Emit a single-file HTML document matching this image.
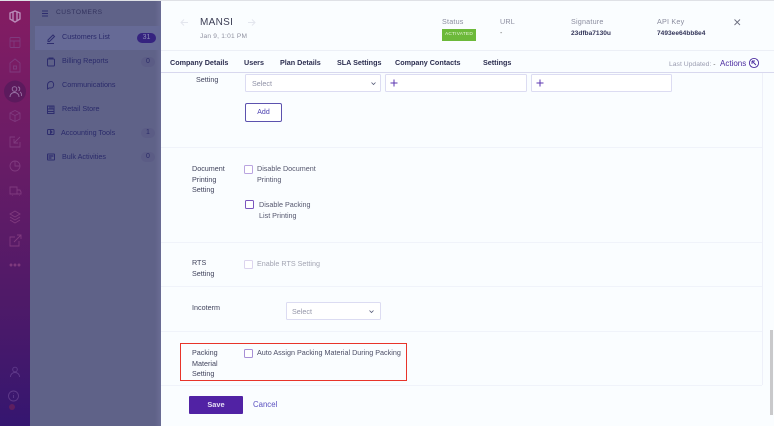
<!DOCTYPE html>
<html><head><meta charset="utf-8">
<style>
html,body{margin:0;padding:0;width:774px;height:426px;overflow:hidden;background:#fafdff;font-family:"Liberation Sans",sans-serif;}
.a{position:absolute;white-space:nowrap;}
.line{position:absolute;height:1px;background:#f0f3fa;}
.lb{font-size:7.2px;color:#40435c;line-height:10.5px;}
.nav{position:absolute;left:62px;font-size:7.2px;color:#2a2a6a;white-space:nowrap;line-height:10px;}
.bdg{position:absolute;width:14px;height:10px;border-radius:5px;background:#5b5c85;color:#2a2a68;font-size:7px;text-align:center;line-height:10px;}
.tab{position:absolute;top:58px;font-size:7.2px;color:#2c2e50;white-space:nowrap;line-height:10px;font-weight:bold;}
.cb{position:absolute;width:7px;height:7px;border:1.2px solid #b9a4e0;border-radius:1.5px;background:#fff;}
.box{position:absolute;background:#fff;border:1px solid #dcdcf2;border-radius:1.5px;box-sizing:border-box;}
svg{position:absolute;overflow:visible;fill:none;}
</style></head><body>
<div class="a" style="left:0;top:0;width:774px;height:1px;background:#dfe1e6;z-index:5"></div>
<div class="a" style="left:0;top:0;width:30px;height:426px;background:linear-gradient(180deg,#851c62 0%,#6a1c66 35%,#4f1a68 70%,#351670 100%)"></div>
<div class="a" style="left:30px;top:0;width:131px;height:426px;background:#5f6288"></div>
<div class="a" style="left:155px;top:0;width:6px;height:426px;background:linear-gradient(90deg,#5f6288,#6a6c94)"></div>
<div class="a" style="left:35px;top:26px;width:126px;height:24px;background:#666a96"></div>

<!-- rail icons -->
<svg style="left:0;top:0" width="30" height="426" stroke="#7f3a7e" stroke-width=".9">
<path d="M10 13l5-2 5 2v6l-5 3-5-3zM13 12v9M17 11.500v9" stroke="#b98ab8" stroke-width="1.400"/>
<rect x="10" y="37.500" width="10" height="10" rx="1"/><path d="M10 41h10M14 41v6.500"/>
<path d="M10 63l5-4 5 4v9h-10zM13.500 66h3v3h-3z"/>
<circle cx="15" cy="91.500" r="11" fill="#5c1a5d" stroke="none"/>
<circle cx="14.500" cy="89" r="2.300" stroke="#9a74a6"/><path d="M10 97c0-6 9-6 9 0M18 87c2 0 2.500 3 .5 4M20 92c1.500 1 1.500 2 1.500 4" stroke="#9a74a6"/>
<path d="M10 113l5-2.500 5 2.500v6l-5 2.500-5-2.500zM10 113l5 2.500 5-2.500M15 115.500v6"/>
<path d="M15 137h-5v10h10v-5M20 137l-6 6M14 139v4h4"/>
<circle cx="15" cy="166" r="5"/><path d="M15 161v5h5"/>
<path d="M10 187h7v7h-7zM17 190h3l1 2v2h-4zM12 195.500h.5M19 195.500h.5"/>
<path d="M15 211l5 3-5 3-5-3zM10 217l5 3 5-3M10 220l5 3 5-3"/>
<path d="M15 237h-5v9h9v-5M14 242l7-7M17 235h4v4"/>
<circle cx="11" cy="265" r="1" fill="#7f3a7e"/><circle cx="15" cy="265" r="1" fill="#7f3a7e"/><circle cx="19" cy="265" r="1" fill="#7f3a7e"/>
<circle cx="15" cy="369.500" r="2.300" stroke="#5f3a8a"/><path d="M10.500 377c0-6 9-6 9 0" stroke="#5f3a8a"/>
<circle cx="13.500" cy="396" r="5" stroke="#5f3a8a"/><path d="M13.500 395v3M13.500 393.500v.5" stroke="#5f3a8a"/>
<circle cx="12" cy="407" r="3" fill="#5e1f60" stroke="none"/>
</svg>

<!-- panel -->
<svg style="left:0;top:0" width="161" height="426" stroke="#2e2d6e" stroke-width="1">
<path d="M42 11h6M42 13.500h6M42 16h6"/>
<path d="M48 40l5-5 1.500 1.500-5 5h-1.500zM47 43.500h7" />
<path d="M47.500 59h6a1 1 0 0 1 1 1v5a1 1 0 0 1-1 1h-5a1 1 0 0 1-1-1zM49 59v-1h4v1"/>
<path d="M51 81.500c3.500 0 3.500 6.500 0 6.500h-2l-1.500 1v-4c0-2 1.500-3.500 3.500-3.500z"/>
<path d="M47.500 106h6.500v7.500h-6.500zM47.500 109h6.500M47.500 111.500h6.500M50 106v3M52 106v3"/>
<rect x="47.500" y="129.500" width="6.500" height="5" rx="1"/><path d="M50.500 130.500v3l1.500-1.500z"/>
<rect x="47.500" y="154" width="7" height="6" rx=".5"/><path d="M48.500 156h5M48.500 158h3" stroke-width="1.200"/>
</svg>
<div class="a" style="left:56px;top:8px;font-size:6.600px;color:#33335e;letter-spacing:.5px;line-height:10px">CUSTOMERS</div>
<div class="nav" style="top:32px">Customers List</div>
<div class="nav" style="top:56px">Billing Reports</div>
<div class="nav" style="top:80px">Communications</div>
<div class="nav" style="top:104px">Retail Store</div>
<div class="nav" style="top:128px;left:61px">Accounting Tools</div>
<div class="nav" style="top:152px">Bulk Activities</div>
<div class="bdg" style="left:137px;top:33px;width:19px;background:#35237f;color:#8d8cb8">31</div>
<div class="bdg" style="left:141px;top:57px">0</div>
<div class="bdg" style="left:141px;top:128px">1</div>
<div class="bdg" style="left:141px;top:152px">0</div>

<!-- header -->
<div class="line" style="left:161px;top:50px;width:613px;background:#eceff6"></div>
<div class="line" style="left:161px;top:72px;width:613px;background:#d8d8ee"></div>
<svg style="left:180px;top:18px" width="90" height="10" stroke="#e3e6ee" stroke-width="1"><path d="M8 4.500h-7M4 1.500l-3 3 3 3M68 4.500h7M72 1.500l3 3-3 3"/></svg>
<div class="a" style="left:200px;top:16px;font-size:10px;color:#3b3d54;letter-spacing:.3px;line-height:13px">MANSI</div>
<div class="a" style="left:200px;top:32px;font-size:6.600px;color:#8f91a0;letter-spacing:.2px;line-height:9px">Jan 9, 1:01 PM</div>
<div class="a" style="left:442px;top:17px;font-size:7.200px;color:#8b8d9f;line-height:9px;letter-spacing:.2px">Status</div>
<div class="a" style="left:442px;top:29px;width:34px;height:12px;background:#6cb93a;color:#eaf6dd;font-size:4.800px;line-height:12px;text-align:center;letter-spacing:.2px">ACTIVATED</div>
<div class="a" style="left:500px;top:17px;font-size:7.200px;color:#8b8d9f;line-height:9px;letter-spacing:.2px">URL</div>
<div class="a" style="left:500px;top:29px;font-size:7px;color:#666;line-height:9px">-</div>
<div class="a" style="left:571px;top:17px;font-size:7.200px;color:#8b8d9f;line-height:9px;letter-spacing:.2px">Signature</div>
<div class="a" style="left:571px;top:29px;font-size:6.600px;color:#34365a;font-weight:bold;line-height:9px">23dfba7130u</div>
<div class="a" style="left:657px;top:17px;font-size:7.200px;color:#8b8d9f;line-height:9px;letter-spacing:.2px">API Key</div>
<div class="a" style="left:657px;top:29px;font-size:6.600px;color:#34365a;font-weight:bold;line-height:9px">7493ee64bb8e4</div>
<svg style="left:734px;top:19px" width="8" height="8" stroke="#6d6f80" stroke-width=".9"><path d="M.5.500l5.500 5.500M6 .5l-5.500 5.500"/></svg>

<!-- tabs -->
<div class="tab" style="left:170px">Company Details</div>
<div class="tab" style="left:244px">Users</div>
<div class="tab" style="left:280px">Plan Details</div>
<div class="tab" style="left:337px">SLA Settings</div>
<div class="tab" style="left:395px">Company Contacts</div>
<div class="tab" style="left:483px">Settings</div>
<div class="a" style="left:669px;top:60px;font-size:6.800px;color:#9a9cb0;line-height:9px">Last Updated: <span style="color:#555">-</span></div>
<div class="a" style="left:720px;top:59px;font-size:8px;color:#4b2ca0;line-height:10px">Actions</div>
<svg style="left:749px;top:58px" width="11" height="11" stroke="#4b2ca0" stroke-width=".9"><circle cx="5" cy="5" r="4.600"/><path d="M3 3h3M3 3v3M3 3l4 4"/></svg>

<!-- body lines -->
<div class="a" style="left:762px;top:73px;width:1px;height:312px;background:#eef0f9"></div>
<div class="line" style="left:161px;top:147px;width:601px"></div>
<div class="line" style="left:161px;top:242px;width:601px"></div>
<div class="line" style="left:161px;top:286px;width:601px"></div>
<div class="line" style="left:161px;top:331px;width:601px"></div>
<div class="line" style="left:161px;top:385px;width:601px"></div>
<div class="a" style="left:770px;top:330px;width:3px;height:85px;background:#c9c9cb"></div>

<!-- select row -->
<div class="a lb" style="left:196px;top:75px">Setting</div>
<div class="box" style="left:245px;top:74px;width:136px;height:18px"></div>
<div class="a" style="left:252px;top:79px;font-size:7.200px;color:#8f91a6;line-height:10px">Select</div>
<svg style="left:371px;top:82px" width="6" height="4" stroke="#555a78" stroke-width=".8"><path d="M.5.500l2 2 2-2"/></svg>
<div class="box" style="left:385px;top:74px;width:142px;height:18px"></div>
<svg style="left:390px;top:79px" width="8" height="8" stroke="#5b35b0" stroke-width="1"><path d="M4 .5v7M.5 4h7"/></svg>
<div class="box" style="left:531px;top:74px;width:141px;height:18px"></div>
<svg style="left:536px;top:79px" width="8" height="8" stroke="#5b35b0" stroke-width="1"><path d="M4 .5v7M.5 4h7"/></svg>
<div class="a" style="left:245px;top:103px;width:37px;height:19px;box-sizing:border-box;background:#fff;border:1px solid #5c52ae;border-radius:2px;color:#4a3fb0;font-size:7px;text-align:center;line-height:17px">Add</div>

<!-- document -->
<div class="a lb" style="left:192px;top:164px">Document<br>Printing<br>Setting</div>
<div class="cb" style="left:244px;top:165px"></div>
<div class="a lb" style="left:257px;top:164px;color:#55576e">Disable Document<br>Printing</div>
<div class="cb" style="left:245px;top:200px;border-color:#7a55bd"></div>
<div class="a lb" style="left:259px;top:200px;color:#55576e">Disable Packing<br>List Printing</div>

<!-- rts -->
<div class="a lb" style="left:192px;top:258px">RTS<br>Setting</div>
<div class="cb" style="left:244px;top:260px;border-color:#dcd4ee"></div>
<div class="a lb" style="left:257px;top:259px;color:#a2a4b2">Enable RTS Setting</div>

<!-- incoterm -->
<div class="a lb" style="left:192px;top:303px">Incoterm</div>
<div class="box" style="left:286px;top:302px;width:95px;height:18px"></div>
<div class="a" style="left:292px;top:307px;font-size:7.200px;color:#9496a8;line-height:10px">Select</div>
<svg style="left:369px;top:310px" width="6" height="4" stroke="#555a78" stroke-width=".8"><path d="M.5.500l2 2 2-2"/></svg>

<!-- packing -->
<div class="a" style="left:180px;top:343px;width:227px;height:38px;box-sizing:border-box;border:1.500px solid #e8342a"></div>
<div class="a lb" style="left:192px;top:348px">Packing<br>Material<br>Setting</div>
<div class="cb" style="left:244px;top:349px;border-color:#a78fd6"></div>
<div class="a lb" style="left:257px;top:348px;color:#4c4e66">Auto Assign Packing Material During Packing</div>

<!-- footer -->
<div class="a" style="left:189px;top:396px;width:54px;height:18px;background:#5122a4;border-radius:1px;color:#e6e0f5;font-size:7.400px;text-align:center;line-height:18px;font-weight:bold">Save</div>
<div class="a" style="left:253px;top:400px;font-size:7.800px;color:#5a50c0;line-height:10px">Cancel</div>
</body></html>
